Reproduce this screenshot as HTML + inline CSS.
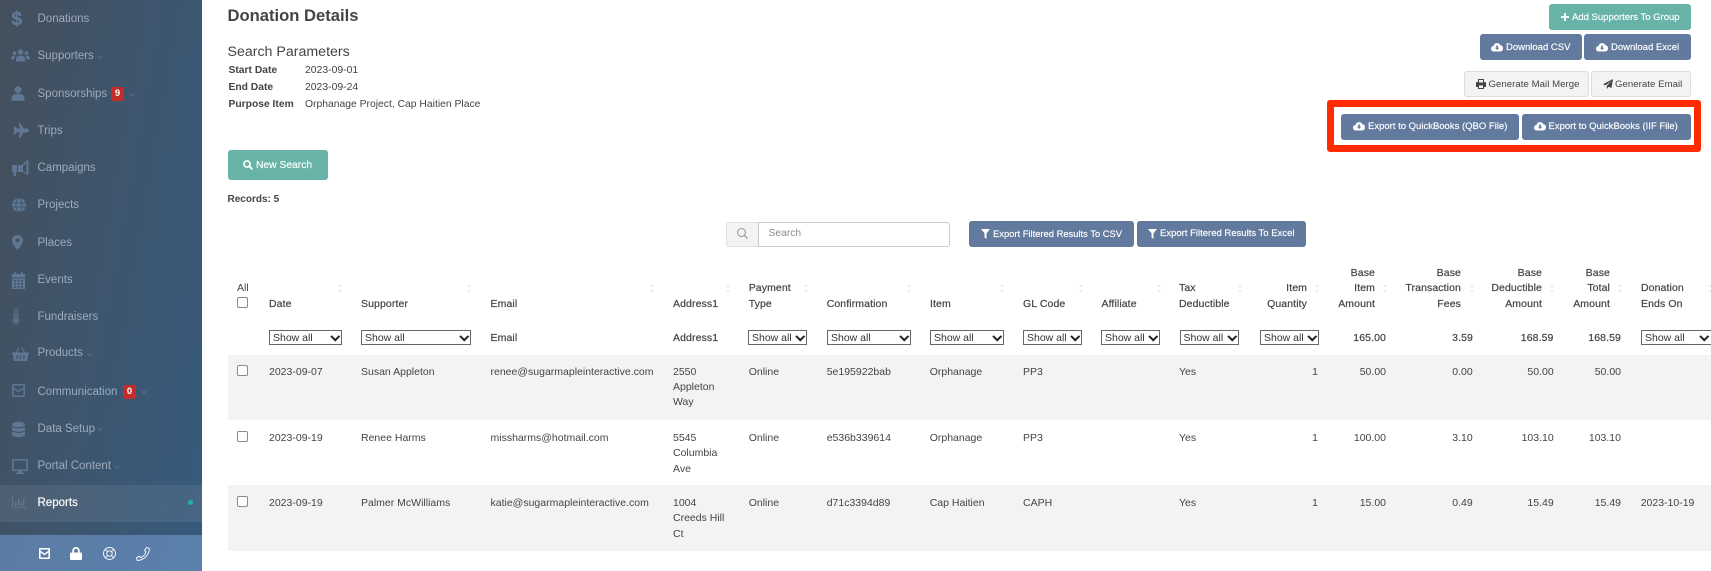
<!DOCTYPE html>
<html lang="en">
<head>
<meta charset="utf-8">
<title>Donation Details</title>
<style>
html,body{margin:0;padding:0;background:#fff}
body{width:1711px;height:571px;overflow:hidden;position:relative;font-family:"Liberation Sans",sans-serif;font-size:10.5px;color:#444}
.t{position:absolute;line-height:14px;height:14px;white-space:nowrap;margin-top:1px}
.m{-webkit-text-stroke:.2px currentColor;letter-spacing:.1px}
.b{font-weight:bold}
.box{position:absolute;box-sizing:border-box}
.btn{position:absolute;box-sizing:border-box;border-radius:3px;background:#627a9e}
.teal{background:#68b3a8}
.gray{background:#f3f3f3;border:1px solid #ddd}
.w{color:#fff;font-size:9.5px;-webkit-text-stroke:.15px #fff}
.k{color:#444;font-size:9.6px;letter-spacing:.05px}
svg{position:absolute;overflow:visible}
#side{position:absolute;left:0;top:0;width:202px;height:571px;background:linear-gradient(100deg,#444f5c 0%,#3d566f 55%,#375a7d 100%)}
#side .t{font-size:11.5px;color:#9dabbc;left:37.5px}
#side svg{fill:#5f7792}
.badge{position:absolute;width:13px;height:14px;background:#c42b2b;border-radius:2px;color:#fff;font-size:9.5px;font-weight:bold;text-align:center;line-height:14px}
.ch{position:absolute;width:3px;height:3px;border-right:1px solid #566f8a;border-bottom:1px solid #566f8a;transform:rotate(45deg)}
.row{position:absolute;left:228px;width:1483px;background:#f3f3f3}
.sel{position:absolute;top:330px;height:15px}
.sel select{display:block;box-sizing:border-box;width:100%;height:15px;border:1px solid #666;border-radius:0;background:#fff;color:#333;font:10.5px "Liberation Sans",sans-serif;padding:0 0 0 3px;margin:0;-webkit-appearance:none;appearance:none}
.sel:after{content:"";position:absolute;right:3.5px;top:3px;width:4.5px;height:4.5px;border-right:2px solid #222;border-bottom:2px solid #222;transform:rotate(45deg)}
.cb{position:absolute;box-sizing:border-box;width:10.5px;height:10.5px;border:1px solid #8a8a8a;border-radius:2px;background:#fff}
.s{position:absolute;width:4px;height:12px;top:283px}
.s:before,.s:after{content:"";position:absolute;left:0;border-left:2px solid transparent;border-right:2px solid transparent}
.s:before{top:1px;border-bottom:3px solid #ececec}
.s:after{top:7px;border-top:3px solid #ececec}
</style>
</head>
<body>
<div id="side">
  <div class="t b" style="left:11.5px!important;top:10px;font-size:19px;line-height:18px;height:18px;color:#5f7792;-webkit-text-stroke:.5px #5f7792">$</div>
  <div class="t" style="top:11px">Donations</div>

  <svg style="left:11px;top:49px" width="19" height="13" viewBox="0 0 19 13"><circle cx="9.5" cy="3" r="2.8"/><path d="M5 12.5v-2.5c0-2 1.6-3.4 4.5-3.4S14 8 14 10v2.500z"/><circle cx="3.500" cy="4.300" r="1.900"/><circle cx="15.500" cy="4.300" r="1.900"/><path d="M0 10c0-2 1-3.200 3.500-3.200l.8.200C3.600 8 3.500 9 3.500 10.500H0zM19 10c0-2-1-3.200-3.500-3.200l-.8.200c.7 1 .8 2 .8 3.500H19z"/></svg>
  <div class="t" style="top:48px">Supporters</div>
  <div class="ch" style="left:97.500px;top:54px"></div>

  <svg style="left:11px;top:86px" width="14" height="15" viewBox="0 0 14 15"><circle cx="7" cy="3.700" r="3.500"/><path d="M.5 14.800v-2.500C.5 9.800 2.500 8 5 8h4c2.500 0 4.500 1.800 4.500 4.300v2.500z"/></svg>
  <div class="t" style="top:86px">Sponsorships</div>
  <div class="badge" style="left:111px;top:87px">9</div>
  <div class="ch" style="left:130px;top:91.500px"></div>

  <svg style="left:11.500px;top:123px" width="17" height="15" viewBox="0 0 17 15"><path d="M6.500 0h1.800l3.200 5.500h3.300c1.200 0 2.200.9 2.200 2s-1 2-2.200 2h-3.300L8.300 15H6.500l1.500-5.500H4.500L3 11.500H1.500L2.300 7.500 1.500 3.500H3l1.500 2H8z"/></svg>
  <div class="t" style="top:123px">Trips</div>

  <svg style="left:11.500px;top:160px" width="17" height="16" viewBox="0 0 17 16"><path d="M15 0c1 0 1.500.7 1.500 1.500v12c0 1-1 1.800-1.800 1.300L10.500 12H6v-7h4zM14.500 3L11 6v5l3.500 2.500zM0 6c0-.8.600-1 1-1h4v7H4v4H1.500v-4H1c-.4 0-1-.2-1-1z"/></svg>
  <div class="t" style="top:160px">Campaigns</div>

  <svg style="left:11.500px;top:197.500px" width="14" height="14" viewBox="0 0 14 14"><circle cx="7" cy="7" r="6.900"/><g stroke="#41566d" stroke-width=".9" fill="none"><ellipse cx="7" cy="7" rx="3" ry="6.900"/><path d="M0 5h14M0 9h14"/></g></svg>
  <div class="t" style="top:197px">Projects</div>

  <svg style="left:11.500px;top:235px" width="11" height="15" viewBox="0 0 11 15"><path fill-rule="evenodd" d="M5.500 0C8.500 0 11 2.400 11 5.300 11 8.500 7.500 12.500 5.500 15 3.500 12.500 0 8.500 0 5.300 0 2.400 2.500 0 5.500 0zm0 3.300a2 2 0 1 0 0 4 2 2 0 0 0 0-4z"/></svg>
  <div class="t" style="top:235px">Places</div>

  <svg style="left:11.500px;top:272px" width="13" height="17" viewBox="0 0 13 17"><path fill-rule="evenodd" d="M2.500 0h1.500v2h5V0h1.500v2H13v3.500H0V2h2.500zM0 6.500h13V17H0zM2 8v1.700h2V8zm3.500 0v1.700h2V8zM9 8v1.700h2V8zM2 11v1.700h2V11zm3.500 0v1.700h2V11zM9 11v1.700h2V11zM2 14v1.600h2V14zm3.500 0v1.600h2V14zM9 14v1.600h2V14z"/></svg>
  <div class="t" style="top:272px">Events</div>

  <svg style="left:11.500px;top:309px" width="8" height="15" viewBox="0 0 7 15"><path fill-rule="evenodd" d="M1.300 2C1.300.9 2.300 0 3.500 0s2.200.9 2.200 2v6.500C6.500 9.200 7 10.200 7 11.400 7 13.400 5.400 15 3.500 15S0 13.400 0 11.400c0-1.200.5-2.200 1.300-2.900zm1 .2V9.100C1.600 9.500 1 10.400 1 11.400c0 1.400 1.100 2.500 2.500 2.500S6 12.800 6 11.400c0-1-.6-1.900-1.300-2.300V2.200c0-.6-.5-1.100-1.200-1.100s-1.200.5-1.200 1.100z"/><rect x="3" y="4" width="1" height="6"/><circle cx="3.500" cy="11.500" r="1.700"/></svg>
  <div class="t" style="top:309px">Fundraisers</div>

  <svg style="left:11.500px;top:347px" width="17" height="14" viewBox="0 0 17 14"><path fill-rule="evenodd" d="M6.800 0l.9.500L5 5.500h7L9.300.5l.9-.5 3 5.500H17v1.500h-.8l-1 7H1.800l-1-7H0V5.500h3.800zM4.500 8v4h1.200V8zm3.400 0v4h1.200V8zm3.400 0v4h1.200V8z"/></svg>
  <div class="t" style="top:345px">Products</div>
  <div class="ch" style="left:87.500px;top:352px"></div>

  <svg style="left:11.500px;top:384px" width="13" height="13" viewBox="0 0 13 13"><path fill-rule="evenodd" d="M1.500 0h10C12.300 0 13 .7 13 1.500v10c0 .8-.7 1.500-1.500 1.500h-10C.7 13 0 12.300 0 11.500v-10C0 .7.7 0 1.500 0zM1.500 1.500v1.800l5 3.500 5-3.500V1.500zm0 3.500v6.500h10V5l-5 3.500z"/></svg>
  <div class="t" style="top:384px">Communication</div>
  <div class="badge" style="left:123px;top:385px">0</div>
  <div class="ch" style="left:142px;top:389px"></div>

  <svg style="left:11.500px;top:421.500px" width="13" height="15" viewBox="0 0 13 15"><path d="M6.500 0C10 0 13 1 13 2.300v.7C13 4.300 10 5.300 6.500 5.300S0 4.300 0 3v-.7C0 1 3 0 6.500 0zM0 4.800c1.300 1 3.800 1.600 6.500 1.600s5.200-.6 6.500-1.600V7.500c0 1.300-3 2.300-6.500 2.300S0 8.800 0 7.500zM0 9.300c1.300 1 3.800 1.600 6.500 1.600s5.200-.6 6.500-1.600v3.400C13 14 10 15 6.500 15S0 14 0 12.700z"/></svg>
  <div class="t" style="top:421px">Data Setup</div>
  <div class="ch" style="left:97.500px;top:426px"></div>

  <svg style="left:11.500px;top:458.500px" width="16" height="15" viewBox="0 0 16 15"><path fill-rule="evenodd" d="M1.300 0h13.400C15.400 0 16 .6 16 1.300v9.400c0 .7-.6 1.300-1.300 1.300H10v1.600h2V15H4v-1.400h2V12H1.300C.6 12 0 11.400 0 10.700V1.300C0 .6.6 0 1.300 0zm.2 1.500v9h13v-9z"/></svg>
  <div class="t" style="top:458px">Portal Content</div>
  <div class="ch" style="left:114.500px;top:464px"></div>

  <div class="box" style="left:0;top:485px;width:202px;height:37px;background:rgba(255,255,255,.075)"></div>
  <svg style="left:11.500px;top:496px" width="15" height="12" viewBox="0 0 15 12"><path d="M0 0h.9v11.100H15V12H0z"/><path d="M3 6h1.300v4H3zM6 3.500h1.300V10H6zM8.500 6h1.300v4H8.500zM11 2.500h1.300V10H11z"/></svg>
  <div class="t" style="top:495px;color:#fff;-webkit-text-stroke:.15px #fff">Reports</div>
  <div class="box" style="left:187.500px;top:499.500px;width:5px;height:5px;border-radius:50%;background:#21b59f"></div>

  <div class="box" style="left:0;top:535px;width:202px;height:36px;background:linear-gradient(100deg,#5c7ca3,#5a80ad)"></div>
  <svg style="left:39px;top:548px" width="11" height="11" viewBox="0 0 11 11"><path fill="#fff" fill-rule="evenodd" d="M1 0h9c.6 0 1 .4 1 1v9c0 .6-.4 1-1 1H1c-.6 0-1-.4-1-1V1c0-.6.4-1 1-1zm.6 1.500v1.200l3.900 2.800 3.900-2.800V1.500zm0 3v5h7.800v-5L5.500 7.200z"/></svg>
  <svg style="left:70px;top:546.500px" width="12" height="13" viewBox="0 0 12 13"><path fill="#fff" d="M2.300 5.500V3.700C2.300 1.600 4 0 6 0s3.700 1.600 3.700 3.700v1.800h1C11.400 5.500 12 6 12 6.700v5c0 .8-.6 1.300-1.300 1.300H1.300C.6 13 0 12.500 0 11.700v-5C0 6 .6 5.500 1.300 5.500zm1.700 0h4V3.700C8 2.600 7.100 1.700 6 1.700s-2 .9-2 2z"/></svg>
  <svg style="left:103px;top:547px;fill:none!important" width="13" height="13" viewBox="0 0 13 13"><g fill="none" stroke="#fff" stroke-width=".9"><circle cx="6.500" cy="6.500" r="6"/><circle cx="6.500" cy="6.500" r="2.700"/><path d="M2.300 2.300l2.300 2.300M10.700 2.300L8.400 4.600M2.300 10.700l2.300-2.300M10.700 10.700L8.400 8.400"/></g></svg>
  <svg style="left:136px;top:546.500px" width="14" height="14" viewBox="0 0 14 14"><path fill="none" stroke="#fff" stroke-width=".9" d="M10.500.5l2.800.8c.3 5.500-5 12-12 12.200L.5 10.700l3-1.500 1.300 1.600c2.500-1.300 4.300-3.300 5.200-5.800L8.500 3.500z"/></svg>
</div>

<div class="t b" style="left:227.500px;top:5px;font-size:16.600px;line-height:20px;height:20px">Donation Details</div>
<div class="t" style="left:227.500px;top:43px;font-size:14.200px;line-height:17px;height:17px">Search Parameters</div>
<div class="t b" style="left:228.500px;top:62.500px;font-size:10.300px">Start Date</div>
<div class="t" style="left:305px;top:62.500px;font-size:10.400px">2023-09-01</div>
<div class="t b" style="left:228.500px;top:79.500px;font-size:10.300px">End Date</div>
<div class="t" style="left:305px;top:79.500px;font-size:10.400px">2023-09-24</div>
<div class="t b" style="left:228.500px;top:96.500px;font-size:10.300px">Purpose Item</div>
<div class="t" style="left:305px;top:96.500px;font-size:10.350px">Orphanage Project, Cap Haitien Place</div>

<div class="btn teal" style="left:1549px;top:4px;width:142px;height:26px"></div>
<svg style="left:1561px;top:12.500px" width="8" height="8" viewBox="0 0 8 8"><path fill="#fff" d="M3.100 0h1.800v3.100H8v1.800H4.900V8H3.100V4.900H0V3.100h3.100z"/></svg>
<div class="t w" style="left:1572px;top:9.500px">Add Supporters To Group</div>

<div class="btn" style="left:1480px;top:34px;width:102px;height:26px"></div>
<svg style="left:1491px;top:41.500px" width="12" height="10" viewBox="0 0 16 13"><path fill="#fff" d="M4 12.500a3.700 3.700 0 0 1-.6-7.400 4.800 4.800 0 0 1 9-1.100A4.300 4.300 0 0 1 12.300 12.500z"/><path fill="#627a9e" d="M7 4.500h2.200v3H11L8.100 10.500 5.200 7.500H7z"/></svg>
<div class="t w" style="left:1506px;top:39.500px">Download CSV</div>
<div class="btn" style="left:1584px;top:34px;width:107px;height:26px"></div>
<svg style="left:1596px;top:41.500px" width="12" height="10" viewBox="0 0 16 13"><path fill="#fff" d="M4 12.500a3.700 3.700 0 0 1-.6-7.400 4.800 4.800 0 0 1 9-1.100A4.300 4.300 0 0 1 12.300 12.500z"/><path fill="#627a9e" d="M7 4.500h2.200v3H11L8.100 10.500 5.200 7.500H7z"/></svg>
<div class="t w" style="left:1611px;top:39.500px">Download Excel</div>

<div class="btn gray" style="left:1464px;top:71px;width:125px;height:26px"></div>
<svg style="left:1476px;top:79px" width="10" height="10" viewBox="0 0 10 10"><path fill="#444" fill-rule="evenodd" d="M2 0h6v3h1c.6 0 1 .4 1 1v4H8v2H2V8H0V4c0-.6.4-1 1-1h1zm1 1v2.500h4V1zM3 6.500V9h4V6.500z"/></svg>
<div class="t k" style="left:1488.500px;top:77px">Generate Mail Merge</div>
<div class="btn gray" style="left:1591px;top:71px;width:100px;height:26px"></div>
<svg style="left:1603px;top:79px" width="10" height="10" viewBox="0 0 10 10"><path fill="#444" d="M10 0L8.500 9 5.500 7.700 4 10 3.700 7 8.500 2 2.500 6.400 0 5.200z"/></svg>
<div class="t k" style="left:1615px;top:77px">Generate Email</div>

<div class="box" style="left:1327px;top:100px;width:374px;height:52px;border:7px solid #ff2a00;border-radius:3px"></div>
<div class="btn" style="left:1341px;top:114px;width:178px;height:26px"></div>
<svg style="left:1353px;top:120.500px" width="12" height="10" viewBox="0 0 16 13"><path fill="#fff" d="M4 12.500a3.700 3.700 0 0 1-.6-7.400 4.800 4.800 0 0 1 9-1.100A4.300 4.300 0 0 1 12.300 12.500z"/><path fill="#627a9e" d="M7 4.500h2.200v3H11L8.100 10.500 5.200 7.500H7z"/></svg>
<div class="t w" style="left:1368px;top:118.500px">Export to QuickBooks (QBO File)</div>
<div class="btn" style="left:1522px;top:114px;width:169px;height:26px"></div>
<svg style="left:1534px;top:120.500px" width="12" height="10" viewBox="0 0 16 13"><path fill="#fff" d="M4 12.500a3.700 3.700 0 0 1-.6-7.400 4.800 4.800 0 0 1 9-1.100A4.300 4.300 0 0 1 12.300 12.500z"/><path fill="#627a9e" d="M7 4.500h2.200v3H11L8.100 10.500 5.200 7.500H7z"/></svg>
<div class="t w" style="left:1548.500px;top:118.500px">Export to QuickBooks (IIF File)</div>

<div class="btn teal" style="left:228px;top:150px;width:100px;height:30px"></div>
<svg style="left:243px;top:159.500px" width="10" height="10" viewBox="0 0 10 10"><circle cx="4" cy="4" r="3.100" fill="none" stroke="#fff" stroke-width="1.600"/><path d="M6.300 6.300L9.300 9.300" stroke="#fff" stroke-width="1.900"/></svg>
<div class="t w" style="left:256px;top:157.500px;font-size:10.300px">New Search</div>

<div class="t b" style="left:227.500px;top:192px;font-size:10px">Records: 5</div>

<div class="box" style="left:726px;top:221.500px;width:33px;height:25px;background:#f3f3f3;border:1px solid #e0e0e0;border-radius:3px 0 0 3px"></div>
<svg style="left:737px;top:228px" width="11" height="11" viewBox="0 0 11 11"><circle cx="4.500" cy="4.500" r="3.900" fill="none" stroke="#8a8a8a" stroke-width=".9"/><path d="M7.400 7.400L10.500 10.500" stroke="#8a8a8a"/></svg>
<div class="box" style="left:758px;top:221.500px;width:192px;height:25px;background:#fff;border:1px solid #ccc;border-radius:0 3px 3px 0"></div>
<div class="t" style="left:768.500px;top:226px;color:#8a8a8a;font-size:10.300px">Search</div>

<div class="btn" style="left:969px;top:221px;width:165px;height:26px"></div>
<svg style="left:981px;top:228.500px" width="9" height="10" viewBox="0 0 9 10"><path fill="#fff" d="M0 0h9L5.500 4.300V10L3.500 8.500V4.300z"/></svg>
<div class="t w" style="left:993px;top:225.500px;font-size:9.400px">Export Filtered Results To CSV</div>
<div class="btn" style="left:1137px;top:221px;width:169px;height:26px"></div>
<svg style="left:1148px;top:228.500px" width="9" height="10" viewBox="0 0 9 10"><path fill="#fff" d="M0 0h9L5.500 4.300V10L3.500 8.500V4.300z"/></svg>
<div class="t w" style="left:1160px;top:225.500px">Export Filtered Results To Excel</div>

<!-- table header -->
<div class="t" style="left:237px;top:280px">All</div>
<div class="cb" style="left:237px;top:297px"></div>
<div class="t m" style="left:269px;top:295.500px">Date</div>
<div class="t m" style="left:361px;top:295.500px">Supporter</div>
<div class="t m" style="left:490.500px;top:295.500px">Email</div>
<div class="t m" style="left:673px;top:295.500px">Address1</div>
<div class="t m" style="left:748.700px;top:280px">Payment</div>
<div class="t m" style="left:748.700px;top:295.500px">Type</div>
<div class="t m" style="left:826.700px;top:295.500px">Confirmation</div>
<div class="t m" style="left:930px;top:295.500px">Item</div>
<div class="t m" style="left:1023px;top:295.500px">GL Code</div>
<div class="t m" style="left:1101.500px;top:295.500px">Affiliate</div>
<div class="t m" style="left:1179px;top:280px">Tax</div>
<div class="t m" style="left:1179px;top:295.500px">Deductible</div>
<div class="t m" style="right:404px;top:280px">Item</div>
<div class="t m" style="right:404px;top:295.500px">Quantity</div>
<div class="t m" style="right:336px;top:264.500px">Base</div>
<div class="t m" style="right:336px;top:280px">Item</div>
<div class="t m" style="right:336px;top:295.500px">Amount</div>
<div class="t m" style="right:250px;top:264.500px">Base</div>
<div class="t m" style="right:250px;top:280px">Transaction</div>
<div class="t m" style="right:250px;top:295.500px">Fees</div>
<div class="t m" style="right:169px;top:264.500px">Base</div>
<div class="t m" style="right:169px;top:280px">Deductible</div>
<div class="t m" style="right:169px;top:295.500px">Amount</div>
<div class="t m" style="right:101px;top:264.500px">Base</div>
<div class="t m" style="right:101px;top:280px">Total</div>
<div class="t m" style="right:101px;top:295.500px">Amount</div>
<div class="t m" style="left:1641px;top:280px">Donation</div>
<div class="t m" style="left:1641px;top:295.500px">Ends On</div>

<span class="s" style="left:338px"></span><span class="s" style="left:467px"></span><span class="s" style="left:650px"></span><span class="s" style="left:726px"></span><span class="s" style="left:804px"></span><span class="s" style="left:907px"></span><span class="s" style="left:1000px"></span><span class="s" style="left:1079px"></span><span class="s" style="left:1157px"></span><span class="s" style="left:1238px"></span><span class="s" style="left:1315px"></span><span class="s" style="left:1383px"></span><span class="s" style="left:1470px"></span><span class="s" style="left:1550px"></span><span class="s" style="left:1618px"></span><span class="s" style="left:1708px"></span>

<!-- filter row -->
<span class="sel" style="left:269px;width:73px"><select><option>Show all</option></select></span>
<span class="sel" style="left:361px;width:110px"><select><option>Show all</option></select></span>
<div class="t m" style="left:490.500px;top:330px">Email</div>
<div class="t m" style="left:673px;top:330px">Address1</div>
<span class="sel" style="left:748px;width:59px"><select><option>Show all</option></select></span>
<span class="sel" style="left:827px;width:84px"><select><option>Show all</option></select></span>
<span class="sel" style="left:930px;width:74px"><select><option>Show all</option></select></span>
<span class="sel" style="left:1023px;width:59px"><select><option>Show all</option></select></span>
<span class="sel" style="left:1101px;width:59px"><select><option>Show all</option></select></span>
<span class="sel" style="left:1179.500px;width:59px"><select><option>Show all</option></select></span>
<span class="sel" style="left:1260px;width:59px"><select><option>Show all</option></select></span>
<div class="t m" style="right:325px;top:330px">165.00</div>
<div class="t m" style="right:238px;top:330px">3.59</div>
<div class="t m" style="right:157.500px;top:330px">168.59</div>
<div class="t m" style="right:90px;top:330px">168.59</div>
<span class="sel" style="left:1641px;width:70px;overflow:visible"><select style="border-right:0"><option>Show all</option></select></span>

<!-- rows -->
<div class="row" style="top:355px;height:65px"></div>
<div class="row" style="top:485px;height:66px"></div>

<div class="cb" style="left:237px;top:365px"></div>
<div class="t" style="left:269px;top:364px">2023-09-07</div>
<div class="t" style="left:361px;top:364px">Susan Appleton</div>
<div class="t" style="left:490.500px;top:364px">renee@sugarmapleinteractive.com</div>
<div class="t" style="left:673px;top:364px">2550</div>
<div class="t" style="left:673px;top:379px">Appleton</div>
<div class="t" style="left:673px;top:394px">Way</div>
<div class="t" style="left:748.700px;top:364px">Online</div>
<div class="t" style="left:826.700px;top:364px">5e195922bab</div>
<div class="t" style="left:929.700px;top:364px">Orphanage</div>
<div class="t" style="left:1023px;top:364px">PP3</div>
<div class="t" style="left:1179px;top:364px">Yes</div>
<div class="t" style="right:393px;top:364px">1</div>
<div class="t" style="right:325px;top:364px">50.00</div>
<div class="t" style="right:238.300px;top:364px">0.00</div>
<div class="t" style="right:157.300px;top:364px">50.00</div>
<div class="t" style="right:90px;top:364px">50.00</div>

<div class="cb" style="left:237px;top:431px"></div>
<div class="t" style="left:269px;top:430px">2023-09-19</div>
<div class="t" style="left:361px;top:430px">Renee Harms</div>
<div class="t" style="left:490.500px;top:430px">missharms@hotmail.com</div>
<div class="t" style="left:673px;top:430px">5545</div>
<div class="t" style="left:673px;top:445px">Columbia</div>
<div class="t" style="left:673px;top:461px">Ave</div>
<div class="t" style="left:748.700px;top:430px">Online</div>
<div class="t" style="left:826.700px;top:430px">e536b339614</div>
<div class="t" style="left:929.700px;top:430px">Orphanage</div>
<div class="t" style="left:1023px;top:430px">PP3</div>
<div class="t" style="left:1179px;top:430px">Yes</div>
<div class="t" style="right:393px;top:430px">1</div>
<div class="t" style="right:325px;top:430px">100.00</div>
<div class="t" style="right:238.300px;top:430px">3.10</div>
<div class="t" style="right:157.300px;top:430px">103.10</div>
<div class="t" style="right:90px;top:430px">103.10</div>

<div class="cb" style="left:237px;top:496px"></div>
<div class="t" style="left:269px;top:495px">2023-09-19</div>
<div class="t" style="left:361px;top:495px">Palmer McWilliams</div>
<div class="t" style="left:490.500px;top:495px">katie@sugarmapleinteractive.com</div>
<div class="t" style="left:673px;top:495px">1004</div>
<div class="t" style="left:673px;top:510px">Creeds Hill</div>
<div class="t" style="left:673px;top:526px">Ct</div>
<div class="t" style="left:748.700px;top:495px">Online</div>
<div class="t" style="left:826.700px;top:495px">d71c3394d89</div>
<div class="t" style="left:929.700px;top:495px">Cap Haitien</div>
<div class="t" style="left:1023px;top:495px">CAPH</div>
<div class="t" style="left:1179px;top:495px">Yes</div>
<div class="t" style="right:393px;top:495px">1</div>
<div class="t" style="right:325px;top:495px">15.00</div>
<div class="t" style="right:238.300px;top:495px">0.49</div>
<div class="t" style="right:157.300px;top:495px">15.49</div>
<div class="t" style="right:90px;top:495px">15.49</div>
<div class="t" style="left:1640.700px;top:495px">2023-10-19</div>
</body>
</html>
